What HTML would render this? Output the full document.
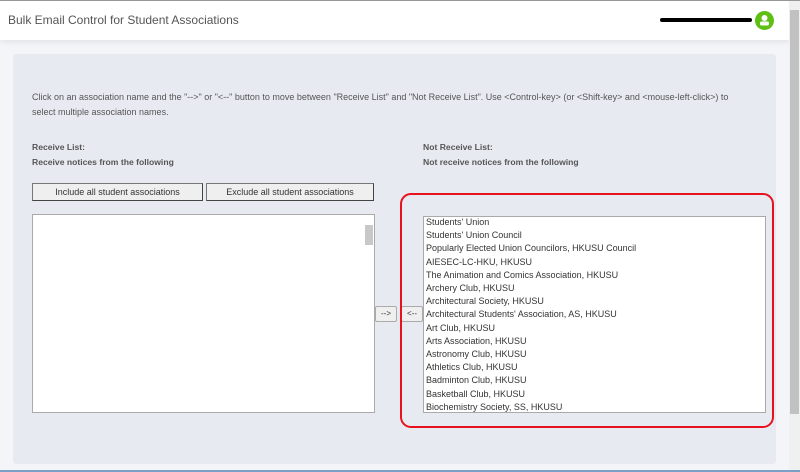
<!DOCTYPE html><html><head><style>
*{margin:0;padding:0;box-sizing:border-box}
body{width:800px;height:472px;overflow:hidden;background:#f4f5f8;font-family:"Liberation Sans",sans-serif;position:relative;color:#444}
.top{position:absolute;left:0;top:0;width:800px;height:1px;background:#999}
.hdr{position:absolute;left:0;top:1px;width:790px;height:39px;background:#fff;box-shadow:0 2px 6px rgba(0,0,0,.08)}
.hdr .t{position:absolute;left:8px;top:12px;font-size:12px;color:#555}
.blk{position:absolute;left:660px;top:17px;width:92px;height:4px;background:#000;border-radius:2px}
.av{position:absolute;left:755px;top:10px;width:19px;height:19px;border-radius:50%;background:#5fbf14}
.sb{position:absolute;left:789px;top:1px;width:11px;height:470px;background:#f0f0f0}
.th{position:absolute;left:790px;top:10px;width:9px;height:404px;background:#c1c1c1}
.bot{position:absolute;left:0;top:470px;width:800px;height:2px;background:#7aa0c8}
.pan{position:absolute;left:13px;top:54px;width:763px;height:410px;background:#e8eaf2;border-radius:3px}
.p{position:absolute;font-size:9px;color:#555;line-height:15px}
.b{font-weight:bold;color:#555;font-size:8.6px}
.btn{position:absolute;height:18px;background:#efefef;border:1px solid #777;border-right-color:#444;border-bottom-color:#444;font-size:9px;text-align:center;line-height:16px;color:#333}
.box{position:absolute;background:#fff;border:1px solid #aaa}
.red{position:absolute;left:400px;top:193px;width:374px;height:235px;border:2.5px solid #e8121f;border-radius:11px}
.li{position:absolute;left:426px;top:216px;font-size:9px;line-height:13.2px;color:#333}
.ab{position:absolute;top:306px;height:16px;width:22px;background:#efefef;border:1px solid #aaa;border-radius:2px;font-size:8px;text-align:center;line-height:14px;color:#333}
</style></head><body>
<div class="top"></div>
<div class="hdr"><div class="t">Bulk Email Control for Student Associations</div><div class="blk"></div>
<div class="av"><svg width="19" height="19"><circle cx="9.5" cy="7" r="3" fill="#fff"/><rect x="5" y="10.5" width="9" height="4" rx="1.5" fill="#fff"/></svg></div></div>
<div class="sb"></div><div class="th"></div>
<div class="pan"></div>
<div class="p" style="left:32px;top:90px;width:722px">Click on an association name and the "-->" or "<--" button to move between "Receive List" and "Not Receive List". Use &lt;Control-key&gt; (or &lt;Shift-key&gt; and &lt;mouse-left-click&gt;) to select multiple association names.</div>
<div class="p b" style="left:32px;top:140px">Receive List:<br>Receive notices from the following</div>
<div class="p b" style="left:423px;top:140px">Not Receive List:<br>Not receive notices from the following</div>
<div class="btn" style="left:32px;top:183px;width:171px">Include all student associations</div>
<div class="btn" style="left:206px;top:183px;width:168px">Exclude all student associations</div>
<div class="box" style="left:32px;top:214px;width:343px;height:199px"><div style="position:absolute;right:1px;top:10px;width:8px;height:20px;background:#c8c8c8"></div></div>
<div class="ab" style="left:375px">--&gt;</div><div class="ab" style="left:401px">&lt;--</div>
<div class="red"></div>
<div class="box" style="left:423px;top:216px;width:343px;height:197px"></div>
<div class="li">Students' Union<br>Students' Union Council<br>Popularly Elected Union Councilors, HKUSU Council<br>AIESEC-LC-HKU, HKUSU<br>The Animation and Comics Association, HKUSU<br>Archery Club, HKUSU<br>Architectural Society, HKUSU<br>Architectural Students' Association, AS, HKUSU<br>Art Club, HKUSU<br>Arts Association, HKUSU<br>Astronomy Club, HKUSU<br>Athletics Club, HKUSU<br>Badminton Club, HKUSU<br>Basketball Club, HKUSU<br>Biochemistry Society, SS, HKUSU</div>
<div class="bot"></div>
</body></html>
